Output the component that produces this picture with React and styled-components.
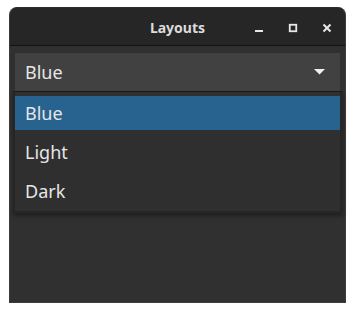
import React from "react";
import styled, { createGlobalStyle } from "styled-components";

const Global = createGlobalStyle`
  html, body { margin: 0; padding: 0; background: #ffffff; }
  body { font-family: "Noto Sans", "DejaVu Sans", sans-serif; }
`;

const Page = styled.div`
  padding: 7px 0 0 9px;
`;

const Window = styled.div`
  position: relative;
  width: 337px;
  height: 296px;
  box-sizing: border-box;
  border: 1px solid #3c3c3c;
  border-top-color: #2c2c2c;
  border-radius: 8px 8px 0 0;
  background: #303030;
  display: flex;
  flex-direction: column;
`;

const TitleBar = styled.div`
  height: 37px;
  flex: none;
  background: #262626;
  border-bottom: 1px solid #141414;
  border-radius: 7px 7px 0 0;
  position: relative;
  display: flex;
  align-items: center;
  justify-content: center;
`;

const Title = styled.div`
  color: #dcdcdc;
  font-size: 14px;
  font-weight: 700;
  margin-top: 2px;
`;

const Controls = styled.div`
  position: absolute;
  right: 1px;
  top: 15px;
  display: flex;
  align-items: center;
`;

const Ctrl = styled.div`
  width: 34px;
  height: 10px;
  display: flex;
  align-items: center;
  justify-content: center;
`;

const Body = styled.div`
  flex: 1;
  padding: 7px 5px 0 5px;
`;

const Combo = styled.div`
  height: 38px;
  background: #414141;
  display: flex;
  align-items: center;
  justify-content: space-between;
  padding: 0 15px 0 10px;
  color: #e6e6e6;
  font-size: 18px;
`;

const Popup = styled.div`
  position: absolute;
  left: 3px;
  top: 83px;
  width: 330px;
  box-sizing: border-box;
  background: #2f2f2f;
  border: 2px solid #262626;
  border-right-width: 3px;
  border-top: 1px solid #1a1a1a;
  padding: 4px 0 3px 0;
  display: flex;
  flex-direction: column;
  gap: 5px;
  box-shadow: 0 3px 4px rgba(0, 0, 0, 0.35);
`;

const Item = styled.div`
  height: 34px;
  display: flex;
  align-items: center;
  padding-left: 10px;
  font-size: 18px;
  color: #e6e6e6;
  background: ${(p) => (p.$active ? "#28628f" : "transparent")};
`;

export default function App() {
  return (
    <>
      <Global />
      <Page>
        <Window>
          <TitleBar>
            <Title>Layouts</Title>
            <Controls>
              <Ctrl>
                <svg width="10" height="10" viewBox="0 0 10 10">
                  <rect x="1" y="7" width="8" height="2" fill="#e8e8e8" />
                </svg>
              </Ctrl>
              <Ctrl>
                <svg width="10" height="10" viewBox="0 0 10 10">
                  <rect x="1.75" y="1.75" width="6.5" height="6.5" fill="none" stroke="#e8e8e8" strokeWidth="1.8" />
                </svg>
              </Ctrl>
              <Ctrl>
                <svg width="10" height="10" viewBox="0 0 10 10">
                  <path d="M1.5 1.5 L8.5 8.5 M8.5 1.5 L1.5 8.5" stroke="#e8e8e8" strokeWidth="2" />
                </svg>
              </Ctrl>
            </Controls>
          </TitleBar>
          <Body>
            <Combo>
              <span>Blue</span>
              <svg width="11" height="6" viewBox="0 0 11 6">
                <path d="M0 0 H11 L5.5 5.5 Z" fill="#f0f0f0" />
              </svg>
            </Combo>
          </Body>
          <Popup>
            <Item $active>Blue</Item>
            <Item>Light</Item>
            <Item>Dark</Item>
          </Popup>
        </Window>
      </Page>
    </>
  );
}
